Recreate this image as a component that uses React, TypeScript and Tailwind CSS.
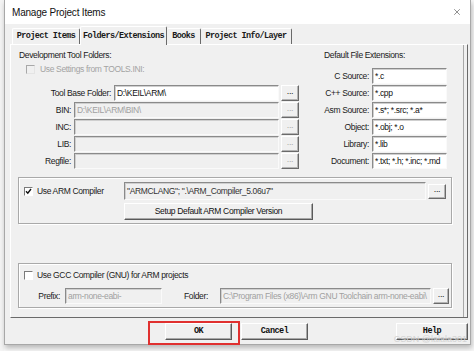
import React from "react";
import { X } from "lucide-react";

const sans = "font-['Liberation_Sans',Arial,sans-serif]";
const mono = "font-['Liberation_Mono','Courier_New',monospace]";

type FieldProps = { className: string; value?: string; disabled?: boolean };

function Field({ className, value = "", disabled }: FieldProps) {
  return (
    <div
      className={`flex items-center px-[2px] border border-t-[#8a8a8a] border-l-[#8a8a8a] border-r-[#fafafa] border-b-[#fafafa] shadow-[inset_1px_1px_0_#cfcfcf] whitespace-nowrap overflow-hidden text-[8.5px] tracking-[-0.35px] leading-none ${
        disabled ? "bg-[#f0f0f0] text-[#a0a0a0]" : "bg-white text-[#111]"
      } ${className}`}
    >
      {value}
    </div>
  );
}

function Dots({ className, disabled }: { className: string; disabled?: boolean }) {
  return (
    <div
      className={`flex items-end justify-center pb-[4px] border border-t-white border-l-white border-r-[#6a6a6a] border-b-[#6a6a6a] shadow-[inset_-1px_-1px_0_#b4b4b4] bg-[#f0f0f0] text-[9px] leading-none ${
        disabled ? "text-[#a8a8a8]" : "text-[#222]"
      } ${className}`}
    >
      ...
    </div>
  );
}

function Check({ checked, disabled }: { checked?: boolean; disabled?: boolean }) {
  return (
    <div
      className={`w-[9px] h-[9px] shrink-0 border ${
        disabled
          ? "border-t-[#a8a8a8] border-l-[#a8a8a8] border-r-[#e4e4e4] border-b-[#e4e4e4] bg-[#f0f0f0]"
          : "border-t-[#7a7a7a] border-l-[#7a7a7a] border-r-white border-b-white bg-white"
      }`}
    >
      {checked && (
        <svg width="7" height="7" viewBox="0 0 7 7">
          <path d="M1 3.2 L2.8 5.2 L6 1" fill="none" stroke="#111" strokeWidth="1.4" />
        </svg>
      )}
    </div>
  );
}

function Btn({ className, label }: { className: string; label: string }) {
  return (
    <div
      className={`h-[17px] flex items-center justify-center border border-t-white border-l-white border-r-[#5a5a5a] border-b-[#5a5a5a] shadow-[inset_-1px_-1px_0_#a8a8a8] bg-[#f0f0f0] text-[#111] ${className}`}
    >
      {label}
    </div>
  );
}

const left = [
  { label: "BIN:", value: "D:\\KEIL\\ARM\\BIN\\" },
  { label: "INC:", value: "" },
  { label: "LIB:", value: "" },
  { label: "Regfile:", value: "" },
];

const exts = [
  { label: "C Source:", value: "*.c" },
  { label: "C++ Source:", value: "*.cpp" },
  { label: "Asm Source:", value: "*.s*; *.src; *.a*" },
  { label: "Object:", value: "*.obj; *.o" },
  { label: "Library:", value: "*.lib" },
  { label: "Document:", value: "*.txt; *.h; *.inc; *.md" },
];

export default function App() {
  return (
    <div className={`w-[474px] h-[351px] bg-[#f7f7f7] flex overflow-hidden text-[8.5px] tracking-[-0.35px] text-[#1a1a1a] ${sans}`}>
      <div className="w-[4px] h-full bg-[#f4f4f4]" />
      <div className="w-[467px] h-[345px] bg-[#f0f0f0] border-l border-r border-b border-[#a8a8a8] shadow-[1px_3px_5px_rgba(0,0,0,0.25)] flex flex-col">
        {/* title bar */}
        <div className="h-[24px] bg-white flex items-center justify-between pl-[7px] pr-[8px]">
          <span className="text-[10px] tracking-[-0.2px] text-[#111]">Manage Project Items</span>
          <X size={10} strokeWidth={1.2} className="text-[#222]" />
        </div>

        <div className="pl-[5px] flex flex-col">
          {/* tabs */}
          <div className={`h-[20px] flex items-end pl-[2px] text-[8.5px] font-bold tracking-[-0.6px] ${mono}`}>
            <div className="w-[68px] h-[16px] border-t border-l border-white border-r border-r-[#6a6a6a] rounded-t-[2px] flex items-center justify-center">
              Project Items
            </div>
            <div className="w-[87px] h-[19px] -mb-px relative z-10 bg-[#f0f0f0] border-t border-l border-white border-r border-r-[#6a6a6a] rounded-t-[2px] flex items-center justify-center">
              Folders/Extensions
            </div>
            <div className="w-[34px] h-[16px] border-t border-white border-r border-r-[#6a6a6a] rounded-t-[2px] flex items-center justify-center">
              Books
            </div>
            <div className="w-[91px] h-[16px] border-t border-white border-r border-r-[#6a6a6a] rounded-t-[2px] flex items-center justify-center">
              Project Info/Layer
            </div>
          </div>

          {/* panel */}
          <div className="w-[458px] h-[274px] border-t border-l border-white border-r border-r-[#6a6a6a] border-b border-b-[#6a6a6a]">
            <div className="h-full mr-[3px] border-r border-[#a8a8a8] flex flex-col">
              {/* folders + extensions */}
              <div className="h-[132px] flex">
                <div className="w-[289px] pl-[8px] flex flex-col">
                  <div className="mt-[3px] h-[14px] leading-[14px]">Development Tool Folders:</div>
                  <div className="h-[14px] flex items-center pl-[7px] gap-[5px] text-[#a3a3a3]">
                    <Check disabled />
                    <span>Use Settings from TOOLS.INI:</span>
                  </div>
                  <div className="mt-[9px] flex flex-col gap-[1px]">
                    <div className="h-[16px] flex items-center">
                      <span className="w-[92px] text-right">Tool Base Folder:</span>
                      <Field className="ml-[3px] w-[165px] h-[16px]" value="D:\KEIL\ARM\" />
                      <Dots className="ml-[2px] w-[18px] h-[16px]" />
                    </div>
                    {left.map((r) => (
                      <div key={r.label} className="h-[16px] flex items-center">
                        <span className="w-[52px] text-right">{r.label}</span>
                        <Field className="ml-[3px] w-[205px] h-[16px]" value={r.value} disabled />
                        <Dots className="ml-[2px] w-[18px] h-[16px]" disabled />
                      </div>
                    ))}
                  </div>
                </div>
                <div className="flex flex-col">
                  <div className="mt-[3px] h-[14px] leading-[14px] pl-[24px]">Default File Extensions:</div>
                  <div className="mt-[6px] flex flex-col gap-[1px]">
                    {exts.map((r) => (
                      <div key={r.label} className="h-[16px] flex items-center">
                        <span className="w-[69px] text-right">{r.label}</span>
                        <Field className="ml-[3px] w-[75px] h-[16px]" value={r.value} />
                      </div>
                    ))}
                  </div>
                </div>
              </div>

              {/* ARM compiler */}
              <div className="ml-[7px] w-[434px] h-[47px] border border-[#a9a9a9] shadow-[inset_1px_1px_0_#fff,1px_1px_0_#fff] flex flex-col">
                <div className="mt-[4px] h-[18px] flex items-center">
                  <div className="w-[105px] pl-[5px] flex items-center gap-[4px]">
                    <Check checked />
                    <span>Use ARM Compiler</span>
                  </div>
                  <Field
                    className="w-[302px] h-[18px] !text-[#333]"
                    value={'"ARMCLANG"; ".\\ARM_Compiler_5.06u7"'}
                    disabled
                  />
                  <Dots className="ml-[2px] w-[18px] h-[15px]" />
                </div>
                <Btn className="mt-[3px] ml-[105px] w-[189px]" label="Setup Default ARM Compiler Version" />
              </div>

              {/* GCC compiler */}
              <div className="mt-[39px] ml-[7px] w-[434px] h-[45px] border border-[#a9a9a9] shadow-[inset_1px_1px_0_#fff,1px_1px_0_#fff] flex flex-col">
                <div className="mt-[4px] h-[14px] pl-[5px] flex items-center gap-[4px]">
                  <Check />
                  <span>Use GCC Compiler (GNU) for ARM projects</span>
                </div>
                <div className="mt-[6px] h-[16px] flex items-center">
                  <span className="w-[41px] text-right">Prefix:</span>
                  <Field className="ml-[5px] w-[97px] h-[16px]" value="arm-none-eabi-" disabled />
                  <span className="w-[46px] text-right">Folder:</span>
                  <Field
                    className="ml-[12px] w-[211px] h-[16px]"
                    value="C:\Program Files (x86)\Arm GNU Toolchain arm-none-eabi\"
                    disabled
                  />
                  <Dots className="ml-[2px] w-[16px] h-[16px]" />
                </div>
              </div>
            </div>
          </div>

          {/* buttons */}
          <div className={`relative h-[26px] pt-[5px] flex items-start text-[8.5px] font-bold tracking-[-0.5px] ${mono}`}>
            <Btn className="ml-[155px] w-[67px]" label="OK" />
            <Btn className="ml-[9px] w-[67px]" label="Cancel" />
            <Btn className="ml-[88px] w-[72px]" label="Help" />
            <div className="absolute left-[138px] top-[3px] w-[92px] h-[24px] border-2 border-[#e0302f]" />
            <span className={`absolute right-[3px] bottom-[-2px] text-[9px] font-normal tracking-normal text-[#d4d4d4] ${sans}`}>
              CSDN @lalala301
            </span>
          </div>
        </div>
      </div>
    </div>
  );
}
